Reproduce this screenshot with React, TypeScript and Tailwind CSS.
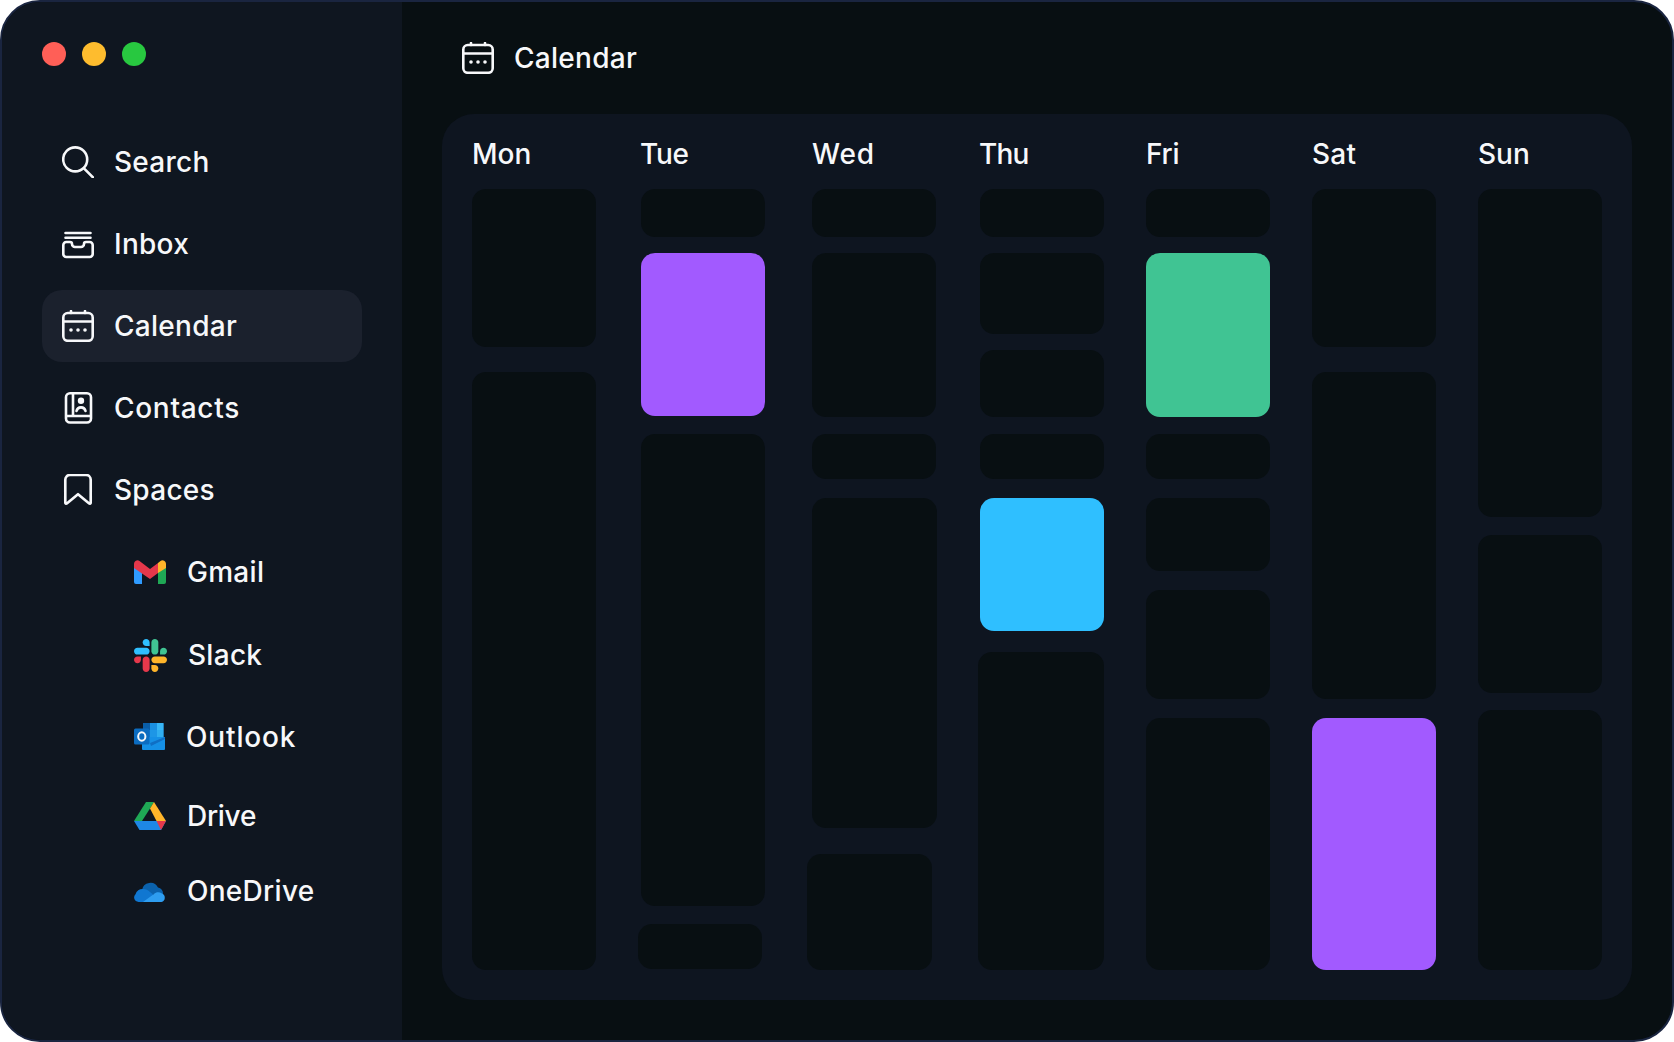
import React from 'react'

const DARK = 'bg-[#080f12]'

interface DayColumn {
  name: string
  className: string
  labelClass?: string
  blocks: string[]
}

// heights and gaps are read off the screenshot, columns are not evenly spaced
const DAYS: DayColumn[] = [
  {
    name: 'Mon',
    className: 'ml-[30px]',
    blocks: [`h-[158px] mb-[25px] ${DARK}`, `h-[598px] ${DARK}`],
  },
  {
    name: 'Tue',
    className: 'ml-[45px]',
    labelClass: '-ml-px tracking-[-0.01em]',
    blocks: [
      `h-[48px] mb-[16px] ${DARK}`,
      'h-[163px] mb-[18px] bg-[#a25aff]',
      `h-[472px] mb-[18px] ${DARK}`,
      `h-[45px] w-[124px] -ml-[3px] ${DARK}`,
    ],
  },
  {
    name: 'Wed',
    className: 'ml-[47px]',
    labelClass: 'tracking-[0.03em]',
    blocks: [
      `h-[48px] mb-[16px] ${DARK}`,
      `h-[164px] mb-[17px] ${DARK}`,
      `h-[45px] mb-[19px] ${DARK}`,
      `h-[330px] mb-[26px] w-[125px] ${DARK}`,
      `h-[116px] w-[125px] -ml-[5px] ${DARK}`,
    ],
  },
  {
    name: 'Thu',
    className: 'ml-[44px]',
    labelClass: '-ml-px tracking-[-0.03em]',
    blocks: [
      `h-[48px] mb-[16px] ${DARK}`,
      `h-[81px] mb-[16px] ${DARK}`,
      `h-[67px] mb-[17px] ${DARK}`,
      `h-[45px] mb-[19px] ${DARK}`,
      'h-[133px] mb-[21px] bg-[#2fbfff]',
      `h-[318px] -ml-[2px] w-[126px] ${DARK}`,
    ],
  },
  {
    name: 'Fri',
    className: 'ml-[42px]',
    labelClass: 'tracking-[-0.01em]',
    blocks: [
      `h-[48px] mb-[16px] ${DARK}`,
      'h-[164px] mb-[17px] bg-[#40c493]',
      `h-[45px] mb-[19px] ${DARK}`,
      `h-[73px] mb-[19px] ${DARK}`,
      `h-[109px] mb-[19px] ${DARK}`,
      `h-[252px] ${DARK}`,
    ],
  },
  {
    name: 'Sat',
    className: 'ml-[42px]',
    labelClass: 'tracking-[0.01em]',
    blocks: [`h-[158px] mb-[25px] ${DARK}`, `h-[327px] mb-[19px] ${DARK}`, 'h-[252px] bg-[#a25aff]'],
  },
  {
    name: 'Sun',
    className: 'ml-[42px]',
    blocks: [`h-[328px] mb-[18px] ${DARK}`, `h-[158px] mb-[17px] ${DARK}`, `h-[260px] ${DARK}`],
  },
]

const SearchIcon = () => (
  <svg width="32" height="32" viewBox="0 0 32 32" fill="none" stroke="#f7f8fa" strokeWidth="2.600" strokeLinecap="round">
    <circle cx="13.200" cy="13.400" r="12" />
    <path d="M22.200 22.600 31 31.400" />
  </svg>
)

const InboxIcon = () => (
  <svg width="32" height="32" viewBox="0 0 32 32" fill="none" stroke="#f7f8fa" strokeWidth="2.600" strokeLinecap="round" strokeLinejoin="round">
    <path d="M3.500 5h25M3.500 9.800h25" />
    <path d="M1.300 17a3 3 0 0 1 3-3h3.700a2 2 0 0 1 2 2 3 3 0 0 0 3 3h6a3 3 0 0 0 3-3 2 2 0 0 1 2-2h3.700a3 3 0 0 1 3 3v9a3 3 0 0 1-3 3H4.300a3 3 0 0 1-3-3z" />
  </svg>
)

const CalendarIcon = () => (
  <svg width="32" height="32" viewBox="0 0 32 32" fill="none" stroke="#f7f8fa" strokeWidth="2.600" strokeLinecap="round">
    <rect x="1.300" y="3" width="29.400" height="27.800" rx="4.500" />
    <path d="M9 1v2M23 1v2M1.500 11.500h29" />
    <circle cx="9" cy="20" r="1.800" fill="#f7f8fa" stroke="none" />
    <circle cx="16" cy="20" r="1.800" fill="#f7f8fa" stroke="none" />
    <circle cx="23" cy="20" r="1.800" fill="#f7f8fa" stroke="none" />
  </svg>
)

const ContactsIcon = () => (
  <svg width="32" height="32" viewBox="0 0 32 32" fill="none" stroke="#f7f8fa" strokeWidth="2.600" strokeLinecap="round">
    <rect x="4" y="1.300" width="25" height="29.200" rx="4" />
    <path d="M11 1.500v22M4.500 24h24" />
    <circle cx="19" cy="8.800" r="3.200" fill="#f7f8fa" stroke="none" />
    <path d="M14.500 19a4.600 4.600 0 0 1 9 0" />
  </svg>
)

const SpacesIcon = () => (
  <svg width="32" height="32" viewBox="0 0 32 34" fill="none" stroke="#f7f8fa" strokeWidth="2.800" strokeLinejoin="round">
    <path d="M2.500 30.500V6a5 5 0 0 1 5-5h17a5 5 0 0 1 5 5v24.500a1 1 0 0 1-1.600.800L16 21.500 4.100 31.300a1 1 0 0 1-1.600-.800z" />
  </svg>
)

const GmailIcon = () => (
  <svg width="32" height="24" viewBox="0 0 32 24">
    <path d="M0 7l8 5v12H2a2 2 0 0 1-2-2z" fill="#2f9bff" />
    <path d="M24 12l8-5v15a2 2 0 0 1-2 2h-6z" fill="#1fa855" />
    <path d="M24 3l2.500-2A3.500 3.500 0 0 1 32 4v4l-8 5z" fill="#ffb52a" />
    <path d="M0 4a3.500 3.500 0 0 1 5.500-3L16 9l8-6v10l-8 6L0 8z" fill="#e5384b" />
  </svg>
)

const SlackIcon = () => (
  <svg width="33" height="33" viewBox="0 0 122.800 122.800">
    <path d="M25.800 77.600c0 7.100-5.800 12.900-12.900 12.900S0 84.700 0 77.600s5.800-12.900 12.900-12.900h12.900v12.900z" fill="#e5384b" />
    <path d="M32.300 77.600c0-7.100 5.800-12.900 12.900-12.900s12.900 5.800 12.900 12.900v32.300c0 7.100-5.800 12.900-12.900 12.900s-12.900-5.800-12.900-12.900V77.600z" fill="#e5384b" />
    <path d="M45.200 25.800c-7.100 0-12.900-5.800-12.900-12.900S38.100 0 45.200 0s12.900 5.800 12.900 12.900v12.900H45.200z" fill="#2fbfff" />
    <path d="M45.200 32.300c7.100 0 12.900 5.800 12.900 12.900s-5.800 12.900-12.900 12.900H12.900C5.800 58.100 0 52.300 0 45.200s5.800-12.900 12.900-12.900h32.300z" fill="#2fbfff" />
    <path d="M97 45.200c0-7.100 5.800-12.900 12.900-12.900s12.900 5.800 12.900 12.900-5.800 12.900-12.900 12.900H97V45.200z" fill="#40c493" />
    <path d="M90.500 45.200c0 7.100-5.800 12.900-12.900 12.900s-12.900-5.800-12.900-12.900V12.900C64.700 5.800 70.500 0 77.600 0s12.900 5.800 12.900 12.900v32.300z" fill="#40c493" />
    <path d="M77.600 97c7.100 0 12.900 5.800 12.900 12.900s-5.800 12.900-12.900 12.900-12.900-5.800-12.900-12.900V97h12.900z" fill="#ffb52a" />
    <path d="M77.600 90.500c-7.100 0-12.900-5.800-12.900-12.900s5.800-12.900 12.900-12.900h32.300c7.100 0 12.900 5.800 12.900 12.900s-5.800 12.900-12.900 12.900H77.600z" fill="#ffb52a" />
  </svg>
)

const OutlookIcon = () => (
  <svg width="31" height="28" viewBox="0 0 31 28">
    <path d="M9 1a1 1 0 0 1 1-1h18.500a1 1 0 0 1 1 1v13H9z" fill="#0f78d4" />
    <rect x="9" y="0" width="7" height="7" fill="#0a5ea8" />
    <rect x="16" y="0" width="7" height="7" fill="#1a8fe0" />
    <rect x="23" y="0" width="6.500" height="7" fill="#38b6f5" />
    <rect x="16" y="7" width="7" height="7" fill="#1d96e6" />
    <rect x="23" y="7" width="6.500" height="7" fill="#30aef0" />
    <path d="M8 14h23v12a1 1 0 0 1-1 1H9a1 1 0 0 1-1-1z" fill="#1590e6" />
    <path d="M16 20 31 14v2l-14 7z" fill="#0f6fc4" />
    <rect x="0" y="5.500" width="15.500" height="16" rx="1.500" fill="#0c6cc0" />
    <ellipse cx="7.800" cy="13.500" rx="3.600" ry="4.200" fill="none" stroke="#f7f8fa" strokeWidth="2" />
  </svg>
)

const DriveIcon = () => (
  <svg width="32" height="28" viewBox="0 0 32 28">
    <path d="M12 0h8l-4 6.500L8 19H0z" fill="#1fa855" />
    <path d="M20 0l12 19h-9.500L16 6.500z" fill="#ffb52a" />
    <path d="M0 19h32l-5 9H5.500z" fill="#1e88e5" />
    <path d="M22.500 19H32l-5 9z" fill="#e5384b" />
  </svg>
)

const OneDriveIcon = () => (
  <svg width="32" height="21" viewBox="0 0 32 21">
    <path d="M8 9a8.500 8.500 0 0 1 16-2.500 6 6 0 0 1 5 6.500L10 14z" fill="#0b62ad" />
    <path d="M4.500 21A4.500 4.500 0 0 1 1.500 13.300 7 7 0 0 1 9 8c3 0 5 1 7 3l5 4-10 6z" fill="#1077d1" />
    <path d="M9 21l11-8c2-2 5-2.500 8-.500a4.500 4.500 0 0 1-.500 8.500z" fill="#2e9df0" />
  </svg>
)

const NAV_ITEMS = [
  { label: 'Search', icon: <SearchIcon />, tracking: 'tracking-[0.01em]' },
  { label: 'Inbox', icon: <InboxIcon />, tracking: 'tracking-[0.01em]' },
  { label: 'Calendar', icon: <CalendarIcon />, tracking: 'tracking-[0.01em]', active: true },
  { label: 'Contacts', icon: <ContactsIcon />, tracking: 'tracking-[0.025em]' },
  { label: 'Spaces', icon: <SpacesIcon />, tracking: 'tracking-[0.01em]' },
]

const SPACES = [
  { label: 'Gmail', icon: <GmailIcon />, className: 'h-[72px] mb-[11px] tracking-[0.01em]' },
  { label: 'Slack', icon: <SlackIcon />, className: 'h-[72px] mb-[10px] tracking-[0.01em]' },
  { label: 'Outlook', icon: <OutlookIcon />, className: 'h-[72px] mb-[7px] tracking-[0.03em]' },
  { label: 'Drive', icon: <DriveIcon />, className: 'h-[72px] mb-[3px] tracking-[-0.01em]' },
  { label: 'OneDrive', icon: <OneDriveIcon />, className: 'h-[72px] tracking-[0.01em]' },
]

export default function App() {
  return (
    <div className="w-[1674px] h-[1042px] bg-white font-['Inter',sans-serif] text-[#f7f8fa]">
      <div className="flex w-full h-full overflow-hidden rounded-[40px] border-2 border-[#1a2540] bg-[#080f12]">
        {/* 侧边栏 */}
        <aside className="w-[400px] shrink-0 bg-[#0f1620] pt-[40px]">
          <div className="flex gap-[16px] pl-[40px]">
            <span className="w-[24px] h-[24px] rounded-full bg-[#ff5f57]" />
            <span className="w-[24px] h-[24px] rounded-full bg-[#febc2e]" />
            <span className="w-[24px] h-[24px] rounded-full bg-[#28c840]" />
          </div>

          <nav className="mt-[60px] ml-[40px] w-[320px] flex flex-col gap-[10px]">
            {NAV_ITEMS.map((item) => (
              <div
                key={item.label}
                className={`h-[72px] flex items-center gap-[20px] pl-[20px] rounded-[20px] text-[28px] font-medium ${item.tracking} ${item.active ? 'bg-[#1b212d]' : ''}`}
              >
                {item.icon}
                <span>{item.label}</span>
              </div>
            ))}
          </nav>

          <div className="mt-[10px] ml-[40px] w-[320px] flex flex-col">
            {SPACES.map((item) => (
              <div key={item.label} className={`flex items-center gap-[21px] pl-[92px] text-[28px] font-medium ${item.className}`}>
                {item.icon}
                <span>{item.label}</span>
              </div>
            ))}
          </div>
        </aside>

        {/* 日历 */}
        <main className="flex-1 pt-[40px] pl-[40px]">
          <div className="h-[32px] mb-[40px] flex items-center gap-[20px] pl-[20px] text-[28px] font-medium tracking-[0.01em]">
            <CalendarIcon />
            <span>Calendar</span>
          </div>

          <div className="w-[1190px] h-[886px] rounded-[32px] bg-[#0e1520] flex">
            {DAYS.map((day) => (
              <div key={day.name} className={`w-[124px] shrink-0 ${day.className}`}>
                <div className={`mt-[20px] h-[40px] mb-[15px] leading-[40px] text-[28px] font-medium ${day.labelClass ?? ''}`}>{day.name}</div>
                {day.blocks.map((cls, idx) => (
                  <div key={idx} className={`rounded-[14px] ${cls}`} />
                ))}
              </div>
            ))}
          </div>
        </main>
      </div>
    </div>
  )
}
